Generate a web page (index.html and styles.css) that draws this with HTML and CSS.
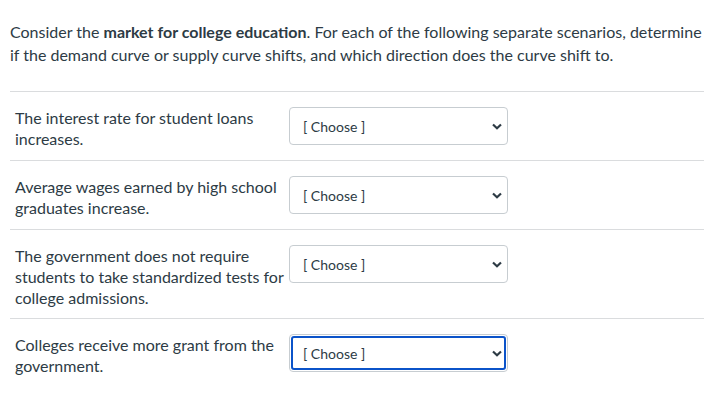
FILE: index.html
```html
<!DOCTYPE html>
<html>
<head>
<meta charset="utf-8">
<link rel="stylesheet" href="styles.css">
</head>
<body>
<div class="question">
  <p class="intro">Consider the <strong>market for college education</strong>. For each of the following separate scenarios, determine if the demand curve or supply curve shifts, and which direction does the curve shift to.</p>
  <div class="answers">
    <div class="row">
      <div class="label">The interest rate for student loans increases.</div>
      <div class="select"><span>[ Choose ]</span><svg class="chev" width="10" height="7" viewBox="0 0 10 7"><path d="M1 1.5 L5 5.2 L9 1.5" fill="none" stroke="#2d3b45" stroke-width="2.2"/></svg></div>
    </div>
    <div class="row">
      <div class="label">Average wages earned by high school graduates increase.</div>
      <div class="select"><span>[ Choose ]</span><svg class="chev" width="10" height="7" viewBox="0 0 10 7"><path d="M1 1.5 L5 5.2 L9 1.5" fill="none" stroke="#2d3b45" stroke-width="2.2"/></svg></div>
    </div>
    <div class="row">
      <div class="label">The government does not require students to take standardized tests for college admissions.</div>
      <div class="select"><span>[ Choose ]</span><svg class="chev" width="10" height="7" viewBox="0 0 10 7"><path d="M1 1.5 L5 5.2 L9 1.5" fill="none" stroke="#2d3b45" stroke-width="2.2"/></svg></div>
    </div>
    <div class="row last">
      <div class="label">Colleges receive more grant from the government.</div>
      <div class="select focused"><span>[ Choose ]</span><svg class="chev" width="10" height="7" viewBox="0 0 10 7"><path d="M1 1.5 L5 5.2 L9 1.5" fill="none" stroke="#2d3b45" stroke-width="2.2"/></svg></div>
    </div>
  </div>
</div>
</body>
</html>
```
FILE: styles.css
```css
html, body {
  margin: 0;
  padding: 0;
  background: #ffffff;
}
body {
  font-family: Lato, "Open Sans", sans-serif;
  color: #2d3b45;
}
.question {
  width: 694px;
  padding: 20px 0 0 10px;
}
.intro {
  margin: 0 0 25px 0;
  font-size: 16px;
  line-height: 23px;
}
.intro strong {
  font-weight: 700;
}
.row {
  display: flex;
  align-items: flex-start;
  border-top: 1px solid #dadcde;
  padding: 15px 0 10px 5px;
}
.label {
  width: 274px;
  font-size: 16px;
  line-height: 21px;
}
.select {
  position: relative;
  box-sizing: border-box;
  width: 219px;
  height: 38px;
  margin-bottom: 5px;
  border: 1px solid #c7cdd1;
  border-radius: 4px;
  display: flex;
  align-items: center;
  justify-content: space-between;
  padding: 0 5px 0 13px;
  font-size: 14px;
  background: #fff;
}
.select.focused::after {
  content: "";
  position: absolute;
  left: 1px;
  top: 1px;
  right: 1px;
  bottom: 1px;
  border: 2px solid #0b53c9;
  border-radius: 3px;
}
.chev {
  display: block;
}
```
